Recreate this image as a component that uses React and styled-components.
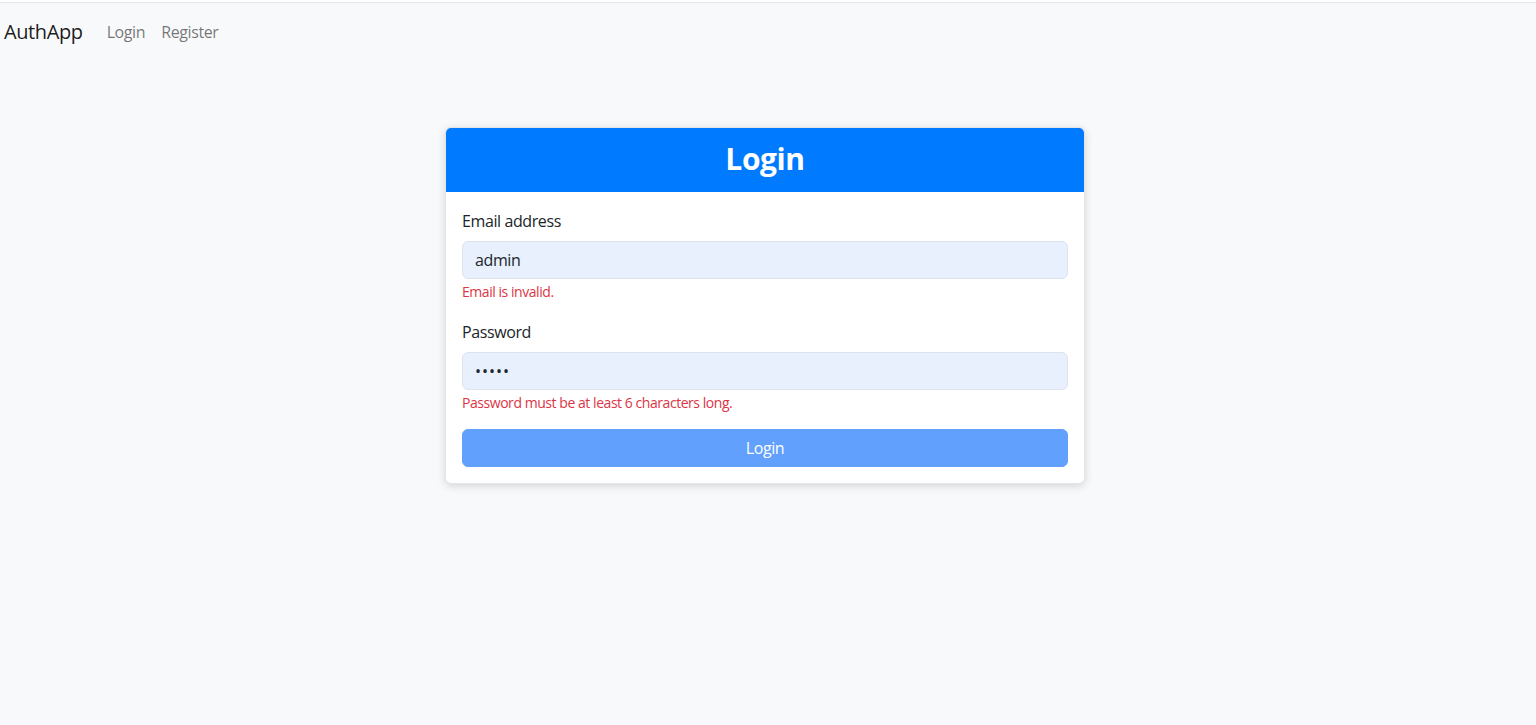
import React, { useState } from 'react';
import styled, { createGlobalStyle } from 'styled-components';

const GlobalStyle = createGlobalStyle`
  html, body {
    margin: 0;
    padding: 0;
    background: #f8f9fa;
    font-family: "Open Sans", "Noto Sans", "Liberation Sans", sans-serif;
    color: #212529;
  }
  * { box-sizing: border-box; }
`;

const Page = styled.div`
  min-height: 725px;
  border-top: 2px solid #ffffff;
  background: #f8f9fa;
`;

const Navbar = styled.nav`
  display: flex;
  align-items: center;
  height: 56px;
  padding: 2px 4px 0;
  border-top: 1px solid #e6e6e6;
`;

const Brand = styled.a`
  font-size: 20px;
  line-height: 30px;
  margin-right: 16px;
  color: rgba(0, 0, 0, 0.9);
  text-decoration: none;
  letter-spacing: -0.4px;
`;

const NavLink = styled.a`
  font-size: 16px;
  line-height: 24px;
  padding: 8px;
  color: rgba(0, 0, 0, 0.55);
  text-decoration: none;
  letter-spacing: -0.4px;
  cursor: pointer;
`;

const Main = styled.main`
  display: flex;
  justify-content: center;
  padding: 69px 6px 0 0;
`;

const Card = styled.div`
  width: 640px;
  background: #fff;
  border: 1px solid rgba(0, 0, 0, 0.1);
  border-radius: 6px;
  box-shadow: 0 2px 8px rgba(0, 0, 0, 0.15);
  overflow: hidden;
`;

const CardHeader = styled.div`
  height: 64px;
  display: flex;
  align-items: center;
  justify-content: center;
  padding-bottom: 3px;
  background: #007bff;
`;

const Title = styled.h2`
  margin: 0;
  color: #fff;
  font-size: 30px;
  font-weight: 700;
  letter-spacing: -0.4px;
`;

const CardBody = styled.form`
  padding: 17px 16px 16px;
`;

const Field = styled.div`
  margin-bottom: ${(p) => p.$mb || 18}px;
`;

const Label = styled.label`
  display: block;
  font-size: 16px;
  line-height: 24px;
  margin-bottom: 8px;
  color: #212529;
  letter-spacing: -0.4px;
`;

const Input = styled.input`
  display: block;
  width: 100%;
  height: 38px;
  padding: 6px 12px;
  font-family: inherit;
  font-size: 16px;
  color: #212529;
  background: #e8f0fe;
  border: 1px solid #dce3ee;
  border-radius: 6px;
  outline: none;
  letter-spacing: ${(p) => (p.type === 'password' ? '1px' : '-0.4px')};
`;

const Feedback = styled.div`
  margin-top: 2px;
  font-size: 14px;
  line-height: 21px;
  color: #dc3545;
  letter-spacing: -0.45px;
`;

const Button = styled.button`
  display: block;
  width: 100%;
  height: 38px;
  font-family: inherit;
  font-size: 16px;
  color: #fff;
  background: #0d6efd;
  opacity: 0.65;
  border: 1px solid #0d6efd;
  border-radius: 6px;
  letter-spacing: -0.4px;
`;

export default function App() {
  const [email, setEmail] = useState('admin');
  const [password, setPassword] = useState('12345');

  return (
    <>
      <GlobalStyle />
      <Page>
        <Navbar>
          <Brand>AuthApp</Brand>
          <NavLink>Login</NavLink>
          <NavLink>Register</NavLink>
        </Navbar>
        <Main>
          <Card>
            <CardHeader>
              <Title>Login</Title>
            </CardHeader>
            <CardBody onSubmit={(e) => e.preventDefault()}>
              <Field>
                <Label>Email address</Label>
                <Input value={email} onChange={(e) => setEmail(e.target.value)} />
                <Feedback>Email is invalid.</Feedback>
              </Field>
              <Field $mb={16}>
                <Label>Password</Label>
                <Input
                  type="password"
                  value={password}
                  onChange={(e) => setPassword(e.target.value)}
                />
                <Feedback>Password must be at least 6 characters long.</Feedback>
              </Field>
              <Button type="submit" disabled>
                Login
              </Button>
            </CardBody>
          </Card>
        </Main>
      </Page>
    </>
  );
}
